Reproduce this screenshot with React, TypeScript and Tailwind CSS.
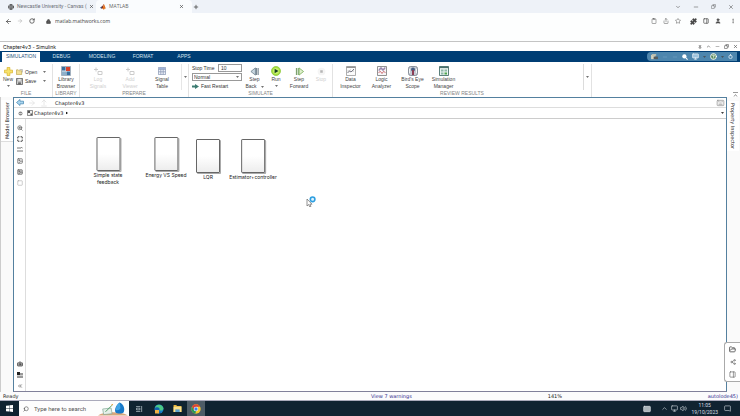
import React from "react";
import {
  Globe, X, Plus, ArrowLeft, ArrowRight, RotateCw, Lock, Clipboard, Share, Share2, Star, Puzzle,
  PanelRight, User, EllipsisVertical, ChevronDown, ChevronUp, Minus, Copy, Search,
  ZoomIn, Maximize, Image, Camera, ChevronsLeft, Square, ArrowUpFromLine, Monitor, Volume2,
  MessageSquare, Keyboard, CircleHelp, Pin, FolderOpen,
} from "lucide-react";

const ui = "font-['Liberation_Sans',Arial,sans-serif]";
const wide = "font-['DejaVu_Sans',Verdana,sans-serif]";

function IconButton({ label, className = "", children }: { label: string; className?: string; children: React.ReactNode }) {
  return (
    <button aria-label={label} className={`flex shrink-0 items-center justify-center ${className}`}>
      {children}
    </button>
  );
}

function Caret({ className = "" }: { className?: string }) {
  return (
    <svg viewBox="0 0 4 2" className={`h-[2px] w-[3px] shrink-0 fill-[#444] ${className}`}>
      <path d="M0 0h4L2 2z" />
    </svg>
  );
}

function MatlabLogo() {
  return (
    <svg viewBox="0 0 14 14" className="size-[6px]">
      <path d="M0 8l4-2 2 2-3 3z" fill="#3a72a8" />
      <path d="M4 6c2 0 3-5 5-6L7 9 5 11 3 10z" fill="#7d2416" />
      <path d="M9 0c2 3 3 8 5 11-2-1-3-1-5 3-1-2-2-3-4-3 2-1 3-7 4-11z" fill="#e2711d" />
    </svg>
  );
}

function BrowserChrome() {
  return (
    <header className="shrink-0 font-['Open_Sans','Noto_Sans',sans-serif] text-[#444]">
      <div className="flex h-[13px] items-stretch bg-[#eef2f8] text-[5px]">
        <div className="flex w-24 items-center gap-[3px] pl-2">
          <Globe className="size-[6px] shrink-0" strokeWidth={3} />
          <span className="w-[69px] whitespace-nowrap font-['Roboto',sans-serif] text-[#6b6f75]">Newcastle University - Canvas (</span>
          <IconButton label="Close Newcastle University tab">
            <X className="size-[5px]" strokeWidth={3} />
          </IconButton>
        </div>
        <div className="flex w-24 items-center gap-[3px] rounded-t bg-[#fafcfe] pl-1">
          <MatlabLogo />
          <span className="flex-1 text-[#666]">MATLAB</span>
          <IconButton label="Close MATLAB tab" className="pr-2">
            <X className="size-[5px]" strokeWidth={3} />
          </IconButton>
        </div>
        <IconButton label="New tab" className="w-2">
          <Plus className="size-[6px]" strokeWidth={3} />
        </IconButton>
        <div className="ml-auto flex items-center gap-3 pr-[6px]">
          <IconButton label="Tab list"><ChevronDown className="size-[6px]" /></IconButton>
          <IconButton label="Minimize window"><Minus className="size-[6px]" /></IconButton>
          <IconButton label="Restore window"><Copy className="size-[5px] -scale-x-100" /></IconButton>
          <IconButton label="Close window"><X className="size-[6px]" /></IconButton>
        </div>
      </div>
      <div className="flex h-4 items-center bg-[#fdfefe] pl-1">
        <IconButton label="Back" className="w-2"><ArrowLeft className="size-[7px]" strokeWidth={2.5} /></IconButton>
        <IconButton label="Forward" className="ml-1 w-2 text-[#aaa]"><ArrowRight className="size-[6px]" /></IconButton>
        <IconButton label="Reload" className="ml-1 w-2"><RotateCw className="size-[6px]" strokeWidth={3} /></IconButton>
        <Lock className="ml-[10px] size-[5px] shrink-0 fill-[#555]" strokeWidth={3} />
        <input
          aria-label="Address"
          defaultValue="matlab.mathworks.com"
          className="ml-1 min-w-0 flex-1 bg-transparent text-[5px] leading-[8px] text-[#444] outline-none"
        />
        <div className="flex items-center gap-[6px] pr-1 text-[#555]">
          <IconButton label="Clipboard"><Clipboard className="size-[6px]" /></IconButton>
          <IconButton label="Share"><Share className="size-[6px]" /></IconButton>
          <IconButton label="Bookmark" className="pr-[3px]"><Star className="size-[6px]" /></IconButton>
          <IconButton label="Extensions"><Puzzle className="size-[7px] fill-[#444]" /></IconButton>
          <IconButton label="Side panel"><PanelRight className="size-[6px]" strokeWidth={3} /></IconButton>
          <IconButton label="Profile" className="pr-[3px]"><User className="size-[6px] fill-[#444]" strokeWidth={3} /></IconButton>
          <IconButton label="Menu"><EllipsisVertical className="size-[6px]" /></IconButton>
        </div>
      </div>
    </header>
  );
}

function TitleBar() {
  return (
    <div className="mt-3 flex h-[10px] shrink-0 items-center border-t border-[#c4c4c4] bg-white pl-[3px] pr-[2px]">
      <h1 className="flex-1 font-['Inter',sans-serif] text-[5px] leading-[8px] text-[#111]">Chapter4v3 - Simulink</h1>
      <div className="flex items-center gap-[4px] text-[#555]">
        <IconButton label="Pin"><Pin className="size-[4px]" strokeWidth={3} /></IconButton>
        <IconButton label="Undock"><ChevronUp className="size-[5px]" strokeWidth={3} /></IconButton>
        <IconButton label="Minimize"><Minus className="size-[5px]" /></IconButton>
        <IconButton label="Restore"><Copy className="size-[5px] -scale-x-100" strokeWidth={3} /></IconButton>
        <IconButton label="Close"><X className="size-[5px]" strokeWidth={3} /></IconButton>
      </div>
    </div>
  );
}

function RibbonTabs() {
  return (
    <nav className="flex h-[11px] shrink-0 items-stretch bg-[#003e74] pl-[2px] text-[5px] leading-[6px] text-[#d5e3ef]">
      <button className="mt-[1px] w-[38px] bg-white pb-[2px] text-[#27527a]">SIMULATION</button>
      <button className="ml-[2px] w-[39px] pb-[2px]">DEBUG</button>
      <button className="w-[42px] pb-[2px]">MODELING</button>
      <button className="w-10 pb-[2px]">FORMAT</button>
      <button className="w-[42px] pb-[2px]">APPS</button>
      <div className="my-[1px] ml-auto mr-[3px] flex w-[90px] items-center justify-between rounded-l bg-[#4d86ae] px-1 text-white">
        <IconButton label="Save and print">
          <svg viewBox="0 0 8 7" className="h-[6px] w-[7px]"><path d="M0 1h5v5H0z" fill="#d5d2bd" /><path d="M3 3h5v3H3z" fill="#555b5c" /><path d="M1 0h5v2H1z" fill="#b9bdae" /></svg>
        </IconButton>
        <IconButton label="Undo"><Minus className="size-[6px] text-[#7ba6c4]" /></IconButton>
        <IconButton label="Redo"><Minus className="size-[6px] text-[#7ba6c4]" /></IconButton>
        <IconButton label="Find">
          <svg viewBox="0 0 7 7" className="size-[6px]"><circle cx="2.800" cy="2.800" r="2.500" fill="#fff" /><path d="M4.500 4.500l2 2" stroke="#fff" strokeWidth="1.200" /></svg>
        </IconButton>
        <IconButton label="Display"><Monitor className="size-[7px] fill-[#9ec3dd]" /></IconButton>
        <Caret className="fill-[#123]" />
        <IconButton label="Help"><CircleHelp className="size-[7px] fill-[#5e8f62]" strokeWidth={3} /></IconButton>
        <Caret className="fill-[#123]" />
        <IconButton label="Ribbon options">
          <svg viewBox="0 0 6 6" className="size-[5px] fill-none stroke-[#dbe9f3]"><circle cx="3" cy="3.500" r="2" /><path d="M3 0v2" /></svg>
        </IconButton>
      </div>
    </nav>
  );
}

function Section({ title, className, children }: { title: string; className: string; children: React.ReactNode }) {
  return (
    <section className={`flex shrink-0 flex-col border-r border-[#e2e2e2] ${className}`}>
      <div className="flex flex-1 items-stretch">{children}</div>
      <h2 className="h-[7px] text-center text-[5px] leading-[7px] text-[#858585]">{title}</h2>
    </section>
  );
}

function Tool({ icon, lines, className, disabled = false, caret = false }: { icon: React.ReactNode; lines: string[]; className: string; disabled?: boolean; caret?: boolean }) {
  return (
    <button disabled={disabled} className={`flex shrink-0 flex-col items-center pt-[2px] text-[5px] leading-[7px] ${disabled ? "text-[#cfcfcf]" : "text-[#444]"} ${className}`}>
      <span className="flex h-[10px] items-center">{icon}</span>
      {lines.map((line, i) => (
        <span key={line} className="flex items-center gap-1 whitespace-nowrap">
          {line}
          {caret && i === 1 && <Caret />}
        </span>
      ))}
      {caret && lines.length === 1 && <Caret className="mt-[2px]" />}
    </button>
  );
}

const plusIcon = (
  <svg viewBox="0 0 10 10" className="size-[9px]">
    <path d="M3.5.5h3v3h3v3h-3v3h-3v-3h-3v-3h3z" fill="#f8e26a" stroke="#d9b325" strokeWidth=".8" />
  </svg>
);
const folderIcon = (
  <svg viewBox="0 0 8 7" className="h-[6px] w-[7px]">
    <path d="M.5 1h2l1 1h3v4.5h-6z" fill="#f2df94" stroke="#b59a3c" strokeWidth=".7" />
    <path d="M4 .6h3.4V4" fill="none" stroke="#888" strokeWidth=".6" />
  </svg>
);
const floppyIcon = (
  <svg viewBox="0 0 8 8" className="size-[7px]">
    <path d="M.5.5h7v7h-7z" fill="#ccc" stroke="#666" />
    <path d="M2 1h4v2.4H2z" fill="#fff" stroke="#777" strokeWidth=".5" />
    <path d="M2.4 5h3.2v2.5H2.4z" fill="#666" />
  </svg>
);
const libraryIcon = (
  <svg viewBox="0 0 10 10" className="size-[10px]">
    <path d="M.5.5h9v9h-9z" fill="#dfe7ee" stroke="#6e8498" strokeWidth=".6" />
    <path d="M1 1h3.5v3.500H1zM5.500 5.500H9V9H5.500z" fill="#376f9e" />
    <path d="M5 1h4v4H5z" fill="#d8432e" />
    <path d="M1 5.500h4V9H1z" fill="#8eb0ca" />
  </svg>
);
const fadedIcon = (
  <svg viewBox="0 0 10 8" className="h-[8px] w-[10px] fill-none stroke-[#ccc]">
    <path d="M1 2.500h4M3 .5v4M5 4.500h4v3H5z" />
  </svg>
);
const tableIcon = (
  <svg viewBox="0 0 10 10" className="size-[8px]">
    <path d="M.5.5h9v9h-9z" fill="#eef2fa" stroke="#8c99b5" />
    <path d="M.5 3h9M.5 6h9M3.500.5v9M6.500.5v9" stroke="#8c99b5" />
    <path d="M1 1h8v1.800H1z" fill="#9fb2d8" />
  </svg>
);
const stepBackIcon = (
  <svg viewBox="0 0 10 10" className="size-[9px]">
    <path d="M6 1v8L1 5z" fill="#c9d6e0" stroke="#5f7482" strokeWidth=".8" />
    <path d="M6.500 1h1v8h-1zM8.500 1h1v8h-1z" fill="#4e6170" />
  </svg>
);
const runIcon = (
  <svg viewBox="0 0 10 10" className="size-[10px]">
    <circle cx="5" cy="5" r="4.500" fill="#a6df3d" stroke="#8fc93f" strokeWidth=".8" />
    <circle cx="5" cy="5" r="3" fill="#c8f26c" />
    <path d="M3.600 2.700v4.600L7.500 5z" fill="#173d25" />
  </svg>
);
const stepForwardIcon = (
  <svg viewBox="0 0 10 10" className="size-[9px]">
    <path d="M1 1h1v8H1zM3 1h1v8H3z" fill="#5c8a48" />
    <path d="M4.500 1v8l5-4z" fill="#dff0cc" stroke="#68a548" strokeWidth=".8" />
  </svg>
);
const stopIcon = (
  <svg viewBox="0 0 10 10" className="size-[9px]">
    <circle cx="5" cy="5" r="4.300" fill="#f5f5f5" />
    <path d="M3.600 3.600h2.800v2.800H3.600z" fill="#b5b5b5" />
  </svg>
);
const inspectorIcon = (
  <svg viewBox="0 0 10 10" className="size-[10px]">
    <path d="M.5.5h9v9h-9z" fill="#fbfbfb" stroke="#999" strokeWidth=".8" />
    <path d="M.5 1.300h9" stroke="#888" strokeWidth="1.200" />
    <path d="M1.500 7l2-2 1.500 1 3-3" fill="none" stroke="#556" strokeWidth=".8" />
    <path d="M1.500 5h2l1-1.500M6 5h2" fill="none" stroke="#999" strokeWidth=".6" />
  </svg>
);
const logicIcon = (
  <svg viewBox="0 0 10 10" className="size-[10px]">
    <path d="M.5.5h9v9h-9z" fill="#f6f6f8" stroke="#777" strokeWidth=".8" />
    <path d="M1.500 4h1.500V2h2v2h2V2h1.500" fill="none" stroke="#537" strokeWidth=".7" />
    <path d="M1.500 6.500l2-1 1.500 2 1.500-2 2 1" fill="none" stroke="#c54b52" strokeWidth=".8" />
  </svg>
);
const birdIcon = (
  <svg viewBox="0 0 10 10" className="size-[10px]">
    <rect x=".5" y=".5" width="9" height="9" rx="2" fill="#c5cbd4" stroke="#737b86" strokeWidth=".8" />
    <circle cx="5" cy="3.600" r="2" fill="#465e83" />
    <path d="M4 4h2v5H4z" fill="#8b3e55" />
    <path d="M1.500 3v4M8.500 3v4" stroke="#fff" strokeWidth=".8" />
  </svg>
);
const managerIcon = (
  <svg viewBox="0 0 10 10" className="size-[10px]">
    <path d="M.5.5h9v9h-9z" fill="#eaf3f0" stroke="#4a706c" strokeWidth=".9" />
    <path d="M.5 1.400h9" stroke="#4a706c" strokeWidth="1.400" />
    <path d="M2 3.500h2.500v2H2zM5.500 3.500H8v2H5.500zM2 6.500h2.500v2H2z" fill="#8fb8a8" />
    <path d="M5.500 6.500H8v2H5.500z" fill="#4fa54c" />
  </svg>
);

function Ribbon() {
  return (
    <div className="flex h-[35px] shrink-0 items-stretch bg-white pt-[2px]">
      <Section title="FILE" className="w-[53px]">
        <Tool icon={plusIcon} lines={["New"]} caret className="w-4" />
        <div className="flex flex-1 flex-col gap-[1px] pt-1 text-[5px] leading-[8px] text-[#333]">
          <button className="flex items-center gap-[2px]">
            {folderIcon}
            <span className="w-4 text-left">Open</span>
            <Caret />
          </button>
          <button className="flex items-center gap-[2px]">
            {floppyIcon}
            <span className="w-4 text-left">Save</span>
            <Caret />
          </button>
        </div>
      </Section>
      <Section title="LIBRARY" className="w-[27px]">
        <Tool icon={libraryIcon} lines={["Library", "Browser"]} className="w-[26px]" />
      </Section>
      <Section title="PREPARE" className="w-[109px]">
        <div className="flex flex-1">
          <Tool icon={fadedIcon} lines={["Log", "Signals"]} disabled className="w-9" />
          <Tool icon={fadedIcon} lines={["Add", "Viewer"]} disabled className="w-7" />
          <Tool icon={tableIcon} lines={["Signal", "Table"]} className="w-9" />
        </div>
        <IconButton label="More prepare tools" className="w-[7px] border-l border-[#e6e6e6]"><Caret /></IconButton>
      </Section>
      <Section title="SIMULATE" className="w-[144px]">
        <div className="flex w-[53px] flex-col gap-[1px] pl-[3px] text-[5px] leading-[7px] text-[#333]">
          <div className="flex h-2 items-center">
            <label htmlFor="stop-time" className="w-[26px] whitespace-nowrap">Stop Time</label>
            <input id="stop-time" defaultValue="10" className="h-2 w-6 border border-[#999] pl-[2px] text-[5px] leading-[6px] outline-none" />
          </div>
          <div className="grid h-2 items-center">
            <select aria-label="Simulation mode" className="col-start-1 row-start-1 h-2 appearance-none border border-[#999] bg-white pl-[1px] text-[5px] leading-[6px]">
              <option>Normal</option>
              <option>Accelerator</option>
            </select>
            <Caret className="pointer-events-none col-start-1 row-start-1 mr-[3px] justify-self-end" />
          </div>
          <button className="flex h-2 items-center gap-[2px] whitespace-nowrap">
            <svg viewBox="0 0 7 5" className="h-[5px] w-[7px]">
              <path d="M0 1.500h3V0l4 2.500L3 5V3.500H0z" fill="#3d7c72" />
            </svg>
            Fast Restart
          </button>
        </div>
        <Tool icon={stepBackIcon} lines={["Step", "Back"]} caret className="w-[25px]" />
        <Tool icon={runIcon} lines={["Run"]} caret className="w-[18px]" />
        <Tool icon={stepForwardIcon} lines={["Step", "Forward"]} className="w-[28px]" />
        <Tool icon={stopIcon} lines={["Stop"]} disabled className="w-4" />
      </Section>
      <Section title="REVIEW RESULTS" className="w-[259px]">
        <div className="flex flex-1 pl-[2px]">
          <Tool icon={inspectorIcon} lines={["Data", "Inspector"]} className="w-[31px]" />
          <Tool icon={logicIcon} lines={["Logic", "Analyzer"]} className="w-[31px]" />
          <Tool icon={birdIcon} lines={["Bird's Eye", "Scope"]} className="w-[31px]" />
          <Tool icon={managerIcon} lines={["Simulation", "Manager"]} className="w-[31px]" />
        </div>
        <IconButton label="More review tools" className="w-2 border-l border-[#dcdcdc]"><Caret /></IconButton>
      </Section>
      <IconButton label="Expand ribbon" className="ml-auto self-end pr-[2px]">
        <svg viewBox="0 0 5 5" className="size-[5px] fill-none stroke-[#999]"><path d="M0 .5h5M1 4.500l1.500-2 1.500 2" /></svg>
      </IconButton>
    </div>
  );
}

function Palette() {
  return (
    <div className="flex w-3 shrink-0 flex-col items-center justify-between border-r border-[#ddd] pb-[2px] pt-[5px] text-[#666]">
      <div className="flex flex-col gap-1">
        <IconButton label="Zoom" className="h-[7px]"><ZoomIn className="size-[6px]" strokeWidth={3} /></IconButton>
        <IconButton label="Fit to view" className="h-[7px]"><Maximize className="size-[6px] text-[#333]" strokeWidth={4} /></IconButton>
        <IconButton label="Signal lines" className="h-[7px]">
          <svg viewBox="0 0 6 5" className="h-[5px] w-[6px] fill-none stroke-[#777]"><path d="M0 1h4M0 4h6M4 0l1.500 1" /></svg>
        </IconButton>
        <IconButton label="Annotation" className="h-[7px]"><Image className="size-[6px]" strokeWidth={3} /></IconButton>
        <IconButton label="Image" className="h-[7px]"><Image className="size-[6px] fill-[#ccc]" strokeWidth={3} /></IconButton>
        <IconButton label="Area" className="h-[7px]"><Square className="size-[6px] text-[#999]" /></IconButton>
      </div>
      <div className="flex flex-col gap-1">
        <IconButton label="Screenshot" className="h-[6px]"><Camera className="size-[6px] fill-[#aaa] text-[#444]" strokeWidth={3} /></IconButton>
        <IconButton label="Record" className="h-[7px]">
          <svg viewBox="0 0 6 6" className="size-[6px]"><path d="M0 0h3v3H0z" fill="#222" /><path d="M3 1h3v2H3zM0 3.500h6V6H0z" fill="#999" /></svg>
        </IconButton>
        <IconButton label="Collapse palette" className="h-[7px]"><ChevronsLeft className="size-[6px]" strokeWidth={3} /></IconButton>
      </div>
    </div>
  );
}

function Block({ label, className }: { label: React.ReactNode; className: string }) {
  return (
    <div className={`absolute flex -translate-x-1/2 flex-col items-center ${className}`}>
      <div className="h-[34px] w-6 rounded-[1px] border border-[#666] bg-linear-to-b from-white from-50% to-[#ededed] shadow-[1px_1px_0_#aaa]" />
      <p className="mt-[1px] whitespace-nowrap text-center font-['Inter',sans-serif] text-[5px] leading-[7px] text-[#222]">{label}</p>
    </div>
  );
}

function Canvas() {
  return (
    <main className="relative min-w-0 flex-1 bg-white">
      <Block className="left-[82px] top-[18px]" label={<>Simple state<br />feedback</>} />
      <Block className="left-[140px] top-[18px]" label="Energy VS Speed" />
      <Block className="left-[182px] top-[20px]" label="LQR" />
      <Block className="left-[227px] top-[20px]" label="Estimator+controller" />
      <svg viewBox="0 0 10 11" className="absolute left-[280px] top-[77px] h-[11px] w-[10px]">
        <path d="M1 3v7l1.700-1.500L3.800 11 5 10.400 3.900 8.200H6z" fill="#fff" stroke="#666" strokeWidth=".7" />
        <circle cx="6.600" cy="3.300" r="2.300" fill="#dff3ff" stroke="#2e9fe0" strokeWidth="1.600" />
      </svg>
    </main>
  );
}

function Workspace() {
  return (
    <div className="flex min-h-0 flex-1 items-stretch bg-[#fafafa]">
      <aside className="w-[13px] shrink-0 border-l border-[#ccc] pt-[3px]">
        <button className={`h-[42px] w-3 rotate-180 border-t border-[#ddd] bg-white text-center ${wide} text-[5px] leading-[12px] text-[#222] [writing-mode:vertical-rl]`}>Model Browser</button>
      </aside>
      <div className="flex min-w-0 flex-1 flex-col border border-[#54809f] border-b-[#80809a] bg-white">
        <div className="flex h-[10px] shrink-0 items-center border-b border-[#ddd] pl-[2px] pr-[1px]">
          <IconButton label="Go back">
            <svg viewBox="0 0 9 8" className="h-[7px] w-2"><path d="M.5 4l4-3.500v2h4v3h-4v2z" fill="#a9d5ef" stroke="#3f83ae" strokeWidth=".8" /></svg>
          </IconButton>
          <IconButton label="Go forward" className="ml-1 text-[#ddd]"><ArrowRight className="size-2" /></IconButton>
          <IconButton label="Go up" className="ml-1 text-[#ddd]"><ArrowUpFromLine className="size-2" /></IconButton>
          <span className={`ml-[7px] flex-1 ${wide} text-[5px] leading-[8px] text-[#222]`}>Chapter4v3</span>
          <IconButton label="Keyboard"><Keyboard className="h-2 w-[9px] text-[#888]" /></IconButton>
        </div>
        <div className="flex h-[11px] shrink-0 items-center border-b border-[#ccc]">
          <IconButton label="Hide browser" className="w-3">
            <svg viewBox="0 0 5 5" className="size-[5px]"><circle cx="2.500" cy="2.500" r="2" fill="#888" /><path d="M1 2.500h3" stroke="#fff" strokeWidth=".6" /></svg>
          </IconButton>
          <svg viewBox="0 0 7 7" className="ml-[1px] size-[6px]"><path d="M.5.5h6v6h-6z" fill="#eee" stroke="#777" /><path d="M1 1h2.500v2.500H1zM4 4h2v2H4z" fill="#555" /></svg>
          <a href="#model" className={`ml-[1px] ${wide} text-[5px] leading-[8px] text-[#222]`}>Chapter4v3</a>
          <svg viewBox="0 0 3 4" className="ml-[3px] h-1 w-[2px] fill-black"><path d="M0 0v4l3-2z" /></svg>
          <IconButton label="Path menu" className="ml-auto pr-[2px]"><Caret className="w-1 fill-black" /></IconButton>
        </div>
        <div className="flex min-h-0 flex-1 items-stretch">
          <Palette />
          <Canvas />
        </div>
      </div>
      <aside className="relative w-[13px] shrink-0 pt-1">
        <button className={`h-[50px] w-3 bg-white text-center ${wide} text-[5px] leading-[12px] text-[#222] [writing-mode:vertical-rl]`}>Property Inspector</button>
        <div className="absolute bottom-[10px] right-0 flex h-10 w-4 flex-col items-center justify-around rounded-l-[3px] border border-r-0 border-[#aaa] bg-white text-[#555]">
          <IconButton label="Open files"><FolderOpen className="size-[7px]" strokeWidth={3} /></IconButton>
          <IconButton label="Connections"><Share2 className="size-[6px]" strokeWidth={2} /></IconButton>
          <IconButton label="Toggle panel"><PanelRight className="size-[7px]" /></IconButton>
        </div>
      </aside>
    </div>
  );
}

function StatusBar() {
  return (
    <footer className={`flex h-[9px] shrink-0 items-center border-b border-[#aab] bg-[#fbfbfc] pl-[3px] pr-[2px] ${wide} text-[5px] leading-[8px] text-[#222]`}>
      <span className="w-[232px]">Ready</span>
      <a href="#warnings" className="flex-1 text-center text-[#312c8c]">View 7 warnings</a>
      <span className="w-[160px]">141%</span>
      <a href="#solver" className="text-[#312c8c]">autolode45)</a>
    </footer>
  );
}

function Taskbar() {
  return (
    <div className="flex h-[15px] shrink-0 items-stretch bg-[#102331] font-['Open_Sans','Noto_Sans',sans-serif] text-white">
      <IconButton label="Start" className="w-[19px]">
        <svg viewBox="0 0 9 9" className="size-[7px] fill-white"><path d="M0 1l4-.5V4.200H0zM4.500.4L9 0v4.200H4.500zM0 4.800h4v3.700L0 8zM4.500 4.800H9V9l-4.500-.5z" /></svg>
      </IconButton>
      <label className="flex w-[110px] items-center bg-[#fdfdfd] pl-1">
        <Search className="size-[6px] shrink-0 -scale-x-100 text-[#333]" />
        <input aria-label="Search" placeholder="Type here to search" className="ml-[5px] w-[61px] bg-transparent font-['Roboto',sans-serif] text-[6px] leading-[8px] outline-none placeholder:text-[#555]" />
        <svg viewBox="0 0 32 15" className="ml-[3px] h-[15px] w-[30px] shrink-0">
          <path d="M0 15c6-4 24-5 32 0z" fill="#d9a77d" />
          <path d="M5 8l9-1 1 6-9 1z" fill="#e6efe8" stroke="#7ba593" strokeWidth=".7" />
          <path d="M8 11l7-7" stroke="#4a9b62" />
          <path d="M14 4l2-1" stroke="#e4a23b" />
          <path d="M23 1c5 2 6 8 4 11-1 1-7 1-8 0-2-3 0-8 4-11z" fill="#1778c8" />
          <path d="M23 1l1 6c-1 2-3 3-5 2 0-3 1-6 4-8z" fill="#42a5e5" />
        </svg>
      </label>
      <IconButton label="Task view" className="w-5">
        <svg viewBox="0 0 8 7" className="h-[6px] w-[7px] fill-none stroke-[#c3ced5]"><path d="M.5 2.500h4v2h-4zM0 .5h5M0 6.500h5M6.500 0v7" strokeWidth=".8" /></svg>
      </IconButton>
      <IconButton label="Edge" className="w-[19px]">
        <svg viewBox="0 0 10 10" className="size-[10px]">
          <circle cx="5" cy="5" r="4.500" fill="#1684ce" />
          <path d="M1 4c1-5 8-4 8.500.5C9 7 6 7 5.500 5.500 7 4 3 2.500 1 4z" fill="#4cc985" />
          <path d="M1 4c2-2 5 0 4 1.500-1 1 0 3 3 2C5 11 1 9 1 4z" fill="#1562ab" />
          <path d="M1 6h4v3.500H1z" fill="#edb045" />
        </svg>
      </IconButton>
      <IconButton label="File Explorer" className="w-[19px]">
        <svg viewBox="0 0 9 8" className="h-[7px] w-[9px]"><path d="M0 0h3l1 1h5v7H0z" fill="#e9b73f" /><path d="M0 2h9v6H0z" fill="#fbe08c" /><path d="M2 5h5v3H2z" fill="#5b9fce" /></svg>
      </IconButton>
      <IconButton label="Chrome" className="w-[18px] bg-[#4d5b66]">
        <svg viewBox="0 0 10 10" className="size-[10px]">
          <circle cx="5" cy="5" r="4.700" fill="#f5c72f" />
          <path d="M.9 2.700A4.700 4.700 0 0 1 9.100 2.700H5L3 6z" fill="#dc4437" />
          <path d="M.9 2.700L3 6.200l2 1L4.300 9.700A4.700 4.700 0 0 1 .9 2.700z" fill="#249a5a" />
          <circle cx="5" cy="5" r="2.200" fill="#fff" />
          <circle cx="5" cy="5" r="1.700" fill="#3e82ec" />
        </svg>
      </IconButton>
      <div className="ml-auto flex items-center text-[#d7dfe4]">
        <IconButton label="Touch keyboard"><Keyboard className="h-2 w-[10px] fill-[#aab4ba] text-[#dde3e7]" /></IconButton>
        <IconButton label="Show hidden icons" className="ml-[9px]"><ChevronUp className="size-[7px]" /></IconButton>
        <IconButton label="Network" className="ml-[3px]"><Monitor className="size-[7px]" /></IconButton>
        <IconButton label="Volume" className="ml-[2px]"><Volume2 className="size-[7px]" /></IconButton>
        <time className="ml-1 whitespace-nowrap text-center font-['Roboto',sans-serif] text-[5px] leading-[7px]">11:05<br />19/10/2023</time>
        <IconButton label="Notifications" className="ml-[6px] mr-[9px]"><MessageSquare className="size-[7px] -scale-x-100" /></IconButton>
      </div>
    </div>
  );
}

export default function App() {
  return (
    <div className={`flex h-screen flex-col overflow-hidden bg-[#fdfefe] ${ui}`}>
      <BrowserChrome />
      <TitleBar />
      <RibbonTabs />
      <Ribbon />
      <Workspace />
      <StatusBar />
      <Taskbar />
    </div>
  );
}
